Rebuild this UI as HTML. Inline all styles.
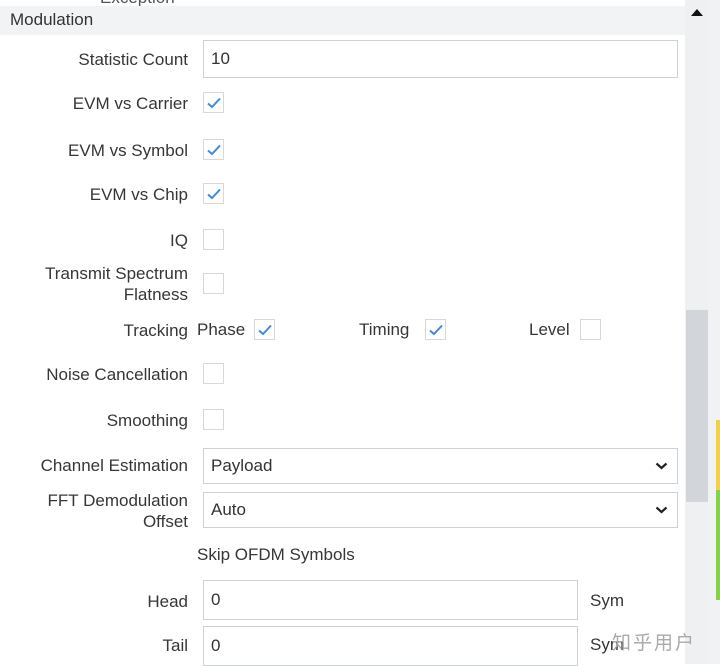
<!DOCTYPE html>
<html><head><meta charset="utf-8"><style>
body{margin:0;width:720px;height:664px;overflow:hidden;background:#fff;font-family:"Liberation Sans","Noto Sans CJK SC",sans-serif;color:#363636;position:relative}
.a{position:absolute}
.l{position:absolute;right:532px;font-size:17px;text-align:right;line-height:21px;white-space:nowrap}
.cb{position:absolute;width:21px;height:21px;border:1px solid #d6d8da;background:#fff;box-sizing:border-box}
.cb svg{position:absolute;left:2px;top:2px}
.in{position:absolute;border:1px solid #cfd2d5;box-sizing:border-box;background:#fff;font-size:17px;padding-left:7px;color:#333}
.chev{position:absolute;right:9px;top:50%;margin-top:-4px}
</style></head><body>
<div class="a" style="left:100px;top:-12px;font-size:17px;color:#555">Exception</div>
<div class="a" style="left:0;top:6px;width:685px;height:29px;background:#f2f3f4"></div>
<div class="a" style="left:10px;top:10px;font-size:17px;color:#333">Modulation</div>

<div class="l" style="top:49px">Statistic Count</div>
<div class="in" style="left:203px;top:40px;width:475px;height:38px;line-height:36px">10</div>

<div class="l" style="top:93px">EVM vs Carrier</div>
<div class="cb" style="left:203px;top:92px"><svg width="16" height="16" viewBox="0 0 16 16"><path d="M2 8.5 L6 12 L14 3.5" fill="none" stroke="#3b8be0" stroke-width="2"/></svg></div>
<div class="l" style="top:140px">EVM vs Symbol</div>
<div class="cb" style="left:203px;top:139px"><svg width="16" height="16" viewBox="0 0 16 16"><path d="M2 8.5 L6 12 L14 3.5" fill="none" stroke="#3b8be0" stroke-width="2"/></svg></div>
<div class="l" style="top:184px">EVM vs Chip</div>
<div class="cb" style="left:203px;top:183px"><svg width="16" height="16" viewBox="0 0 16 16"><path d="M2 8.5 L6 12 L14 3.5" fill="none" stroke="#3b8be0" stroke-width="2"/></svg></div>
<div class="l" style="top:230px">IQ</div>
<div class="cb" style="left:203px;top:229px"></div>
<div class="l" style="top:263px">Transmit Spectrum<br>Flatness</div>
<div class="cb" style="left:203px;top:273px"></div>

<div class="l" style="top:320px">Tracking</div>
<div class="a" style="left:197px;top:320px;font-size:17px">Phase</div>
<div class="cb" style="left:254px;top:319px"><svg width="16" height="16" viewBox="0 0 16 16"><path d="M2 8.5 L6 12 L14 3.5" fill="none" stroke="#3b8be0" stroke-width="2"/></svg></div>
<div class="a" style="left:359px;top:320px;font-size:17px">Timing</div>
<div class="cb" style="left:425px;top:319px"><svg width="16" height="16" viewBox="0 0 16 16"><path d="M2 8.5 L6 12 L14 3.5" fill="none" stroke="#3b8be0" stroke-width="2"/></svg></div>
<div class="a" style="left:529px;top:320px;font-size:17px">Level</div>
<div class="cb" style="left:580px;top:319px"></div>

<div class="l" style="top:364px">Noise Cancellation</div>
<div class="cb" style="left:203px;top:363px"></div>
<div class="l" style="top:410px">Smoothing</div>
<div class="cb" style="left:203px;top:409px"></div>

<div class="l" style="top:455px">Channel Estimation</div>
<div class="in" style="left:203px;top:448px;width:475px;height:36px;line-height:34px">Payload<svg class="chev" width="13" height="8" viewBox="0 0 13 8"><path d="M1.5 1.5 L6.5 6 L11.5 1.5" fill="none" stroke="#222" stroke-width="2.2"/></svg></div>
<div class="l" style="top:490px">FFT Demodulation<br>Offset</div>
<div class="in" style="left:203px;top:492px;width:475px;height:36px;line-height:34px">Auto<svg class="chev" width="13" height="8" viewBox="0 0 13 8"><path d="M1.5 1.5 L6.5 6 L11.5 1.5" fill="none" stroke="#222" stroke-width="2.2"/></svg></div>

<div class="a" style="left:197px;top:545px;font-size:17px">Skip OFDM Symbols</div>
<div class="l" style="top:591px">Head</div>
<div class="in" style="left:203px;top:580px;width:375px;height:40px;line-height:38px">0</div>
<div class="a" style="left:590px;top:591px;font-size:17px">Sym</div>
<div class="l" style="top:635px">Tail</div>
<div class="in" style="left:203px;top:626px;width:375px;height:40px;line-height:38px">0</div>
<div class="a" style="left:590px;top:635px;font-size:17px">Sym</div>

<div class="a" style="left:685px;top:0;width:23px;height:664px;background:#eef0f2"></div>
<div class="a" style="left:686px;top:310px;width:22px;height:192px;background:#d2d6da"></div>
<svg class="a" style="left:690px;top:8px" width="14" height="9" viewBox="0 0 14 9"><path d="M1 8 L7 1 L13 8Z" fill="#111"/></svg>
<div class="a" style="left:708px;top:0;width:12px;height:664px;background:#f1f2f3"></div>
<div class="a" style="left:716px;top:420px;width:4px;height:70px;background:#f2d04a"></div>
<div class="a" style="left:716px;top:490px;width:4px;height:110px;background:#86d24a"></div>
<div class="a" style="left:612px;top:628px;font-size:19px;color:#aaa;letter-spacing:2px;z-index:5">知乎用户</div>
</body></html>
